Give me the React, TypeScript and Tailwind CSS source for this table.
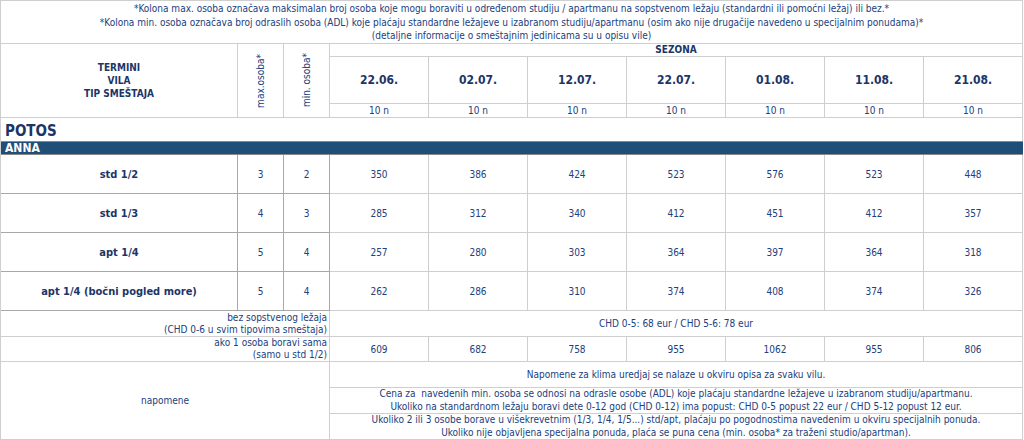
import React from "react";

const dates = ["22.06.", "02.07.", "12.07.", "22.07.", "01.08.", "11.08.", "21.08."];
const rows: { name: string; max: string; min: string; prices: string[] }[] = [
  { name: "std 1/2", max: "3", min: "2", prices: ["350", "386", "424", "523", "576", "523", "448"] },
  { name: "std 1/3", max: "4", min: "3", prices: ["285", "312", "340", "412", "451", "412", "357"] },
  { name: "apt 1/4", max: "5", min: "4", prices: ["257", "280", "303", "364", "397", "364", "318"] },
  { name: "apt 1/4 (bočni pogled more)", max: "5", min: "4", prices: ["262", "286", "310", "374", "408", "374", "326"] },
];
const single = ["609", "682", "758", "955", "1062", "955", "806"];

const L = "border-r border-b border-[#cfcfcf]";
const D = "border-r border-b border-[#a8a8a8]";

export default function App() {
  return (
    <div
      className="w-[1024px] h-[440px] overflow-hidden bg-white text-[#21407e] text-[10px] leading-[13px]"
      style={{ fontFamily: '"DejaVu Sans Condensed", "Liberation Sans", sans-serif' }}
    >
      <div className="grid grid-cols-[237px_46px_46px_99px_99px_99px_99px_99px_99px_99px] grid-rows-[43px_13px_47px_14px_23px_14px_39px_39px_39px_39px_26px_25px_26px_26px_26px] border-t border-l border-[#cfcfcf] w-[1023px]">
        {/* notes */}
        <div className={`${L} col-span-10 flex flex-col items-center pt-[1px] leading-[13.5px]`}>
          <div>*Kolona max. osoba označava maksimalan broj osoba koje mogu boraviti u određenom studiju / apartmanu na sopstvenom ležaju (standardni ili pomoćni ležaj) ili bez.*</div>
          <div>*Kolona min. osoba označava broj odraslih osoba (ADL) koje plaćaju standardne ležajeve u izabranom studiju/apartmanu (osim ako nije drugačije navedeno u specijalnim ponudama)*</div>
          <div>(detaljne informacije o smeštajnim jedinicama su u opisu vile)</div>
        </div>

        {/* header left */}
        <div className={`${L} row-span-3 flex flex-col items-center justify-center font-bold text-[#1c3567] leading-[13px]`}>
          <div>TERMINI</div>
          <div>VILA</div>
          <div>TIP SMEŠTAJA</div>
        </div>
        <div className={`${L} row-span-3 flex items-center justify-center`}>
          <span className="[writing-mode:vertical-rl] rotate-180">max.osoba*</span>
        </div>
        <div className={`${L} row-span-3 flex items-center justify-center`}>
          <span className="[writing-mode:vertical-rl] rotate-180">min. osoba*</span>
        </div>
        <div className={`${L} col-span-7 flex items-center justify-center font-bold text-[#1c3567] leading-none`}>SEZONA</div>
        {dates.map((d) => (
          <div key={d} className={`${L} flex items-center justify-center font-bold text-[12px] text-[#1c3567] pt-[1px]`}>
            {d}
          </div>
        ))}
        {dates.map((d) => (
          <div key={"n" + d} className={`${L} flex items-center justify-center leading-none`}>
            10 n
          </div>
        ))}

        {/* POTOS */}
        <div className="col-span-10 border-r border-[#cfcfcf] flex items-center pl-[4px] text-[15px] font-bold text-[#1c3567] leading-none pt-[3px]">
          POTOS
        </div>
        <div className="col-span-10 bg-[#1f4e79] border-y border-[#8a8a8a] flex items-center pl-[4px] text-white font-bold text-[12px] leading-none">
          ANNA
        </div>

        {rows.map((r) => (
          <React.Fragment key={r.name}>
            <div className={`${D} flex items-center justify-center font-bold text-[11px] text-[#1c3567]`}>{r.name}</div>
            <div className={`${D} flex items-center justify-center`}>{r.max}</div>
            <div className={`${D} flex items-center justify-center`}>{r.min}</div>
            {r.prices.map((p, i) => (
              <div key={i} className={`${L} flex items-center justify-center`}>
                {p}
              </div>
            ))}
          </React.Fragment>
        ))}

        <div className={`${L} col-span-3 flex flex-col items-end justify-center pr-[2px] leading-[12px]`}>
          <div>bez sopstvenog ležaja</div>
          <div>(CHD 0-6 u svim tipovima smeštaja)</div>
        </div>
        <div className={`${L} col-span-7 flex items-center justify-center`}>CHD 0-5: 68 eur / CHD 5-6: 78 eur</div>

        <div className={`${L} col-span-3 flex flex-col items-end justify-center pr-[2px] leading-[12px]`}>
          <div>ako 1 osoba boravi sama</div>
          <div>(samo u std 1/2)</div>
        </div>
        {single.map((p, i) => (
          <div key={i} className={`${L} flex items-center justify-center`}>
            {p}
          </div>
        ))}

        <div className={`${L} col-span-3 row-span-3 flex items-center justify-center`}>napomene</div>
        <div className={`${L} col-span-7 flex items-center justify-center`}>Napomene za klima uredjaj se nalaze u okviru opisa za svaku vilu.</div>
        <div className={`${L} col-span-7 flex flex-col items-center justify-center leading-[12.5px]`}>
          <div>Cena za &nbsp;navedenih min. osoba se odnosi na odrasle osobe (ADL) koje plaćaju standardne ležajeve u izabranom studiju/apartmanu.</div>
          <div>Ukoliko na standardnom ležaju boravi dete 0-12 god (CHD 0-12) ima popust: CHD 0-5 popust 22 eur / CHD 5-12 popust 12 eur.</div>
        </div>
        <div className={`${L} col-span-7 flex flex-col items-center justify-center leading-[12.5px]`}>
          <div>Ukoliko 2 ili 3 osobe borave u višekrevetnim (1/3, 1/4, 1/5...) std/apt, plaćaju po pogodnostima navedenim u okviru specijalnih ponuda.</div>
          <div>Ukoliko nije objavljena specijalna ponuda, plaća se puna cena (min. osoba* za traženi studio/apartman).</div>
        </div>
      </div>
    </div>
  );
}
